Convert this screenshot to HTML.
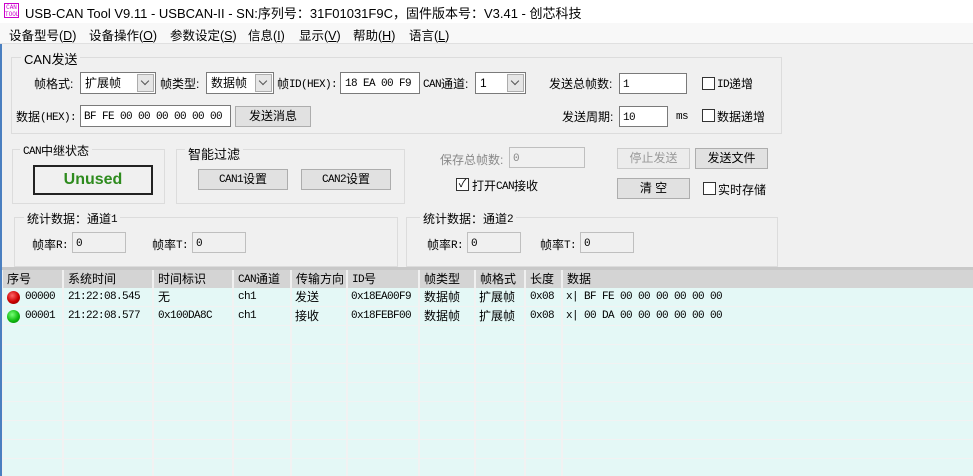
<!DOCTYPE html><html><head><meta charset="utf-8"><style>
*{margin:0;padding:0;box-sizing:border-box}
body{width:973px;height:476px;overflow:hidden;background:#f0f0f0;position:relative;font-family:"Liberation Sans","Noto Sans CJK SC",sans-serif;font-size:12px;color:#000}
.a{position:absolute;white-space:nowrap}
.m{font-family:"Liberation Mono","Noto Sans CJK SC",monospace;font-size:11px;letter-spacing:-0.6px;vertical-align:baseline}
span.m{position:relative;top:-1px}
.box{position:absolute;border:1px solid #dcdcdc}
.lg{position:absolute;background:#f0f0f0;padding:0 3px;white-space:nowrap}
.inp{position:absolute;background:#fff;border:1px solid #7a7a7a;font-family:"Liberation Mono","Noto Sans CJK SC",monospace;font-size:11px;letter-spacing:-0.6px;padding:3px 3px 1px;line-height:16px;white-space:nowrap;overflow:hidden}
.dis{background:#f0f0f0;border-color:#bfbfbf;color:#888}
.btn{position:absolute;background:#e1e1e1;border:1px solid #adadad;text-align:center;white-space:nowrap}
.cb{position:absolute;width:13px;height:13px;border:1px solid #333;background:#fff}
.sel{position:absolute;background:#fff;border:1px solid #7a7a7a;padding:1px 4px;line-height:18px}
.sel i{position:absolute;right:1px;top:1px;width:17px;height:18px;background:#e6e6e6;border:1px solid #acacac}
.sel i:after{content:"";position:absolute;left:4px;top:3px;width:5px;height:5px;border-right:1px solid #555;border-bottom:1px solid #555;transform:rotate(45deg)}
.hd{position:absolute;top:270px;height:18px;background:#d4d4d4;line-height:18px;padding-left:4px;white-space:nowrap}
.td{position:absolute;line-height:19px;white-space:nowrap}
</style></head><body>
<div class="a" style="left:0;top:0;width:973px;height:23px;background:#fff"></div>
<div class="a" style="left:4px;top:3px;width:15px;height:15px;border:1px solid #c0c;background:#fff;font-size:6px;line-height:7px;color:#c0c;text-align:center;font-family:'Liberation Mono'">CAN<br>TOOL</div>
<div class="a" style="left:25px;top:3px;font-size:13px">USB-CAN Tool V9.11 - USBCAN-II - SN:序列号：31F01031F9C，固件版本号：V3.41 - 创芯科技</div>
<div class="a" style="left:0;top:23px;width:973px;height:21px;background:#f8f8f8;border-bottom:1px solid #e0e0e0"></div>
<div class="a" style="left:9px;top:25px;font-size:12.5px">设备型号(<u>D</u>)</div>
<div class="a" style="left:89px;top:25px;font-size:12.5px">设备操作(<u>O</u>)</div>
<div class="a" style="left:170px;top:25px;font-size:12.5px">参数设定(<u>S</u>)</div>
<div class="a" style="left:248px;top:25px;font-size:12.5px">信息(<u>I</u>)</div>
<div class="a" style="left:299px;top:25px;font-size:12.5px">显示(<u>V</u>)</div>
<div class="a" style="left:353px;top:25px;font-size:12.5px">帮助(<u>H</u>)</div>
<div class="a" style="left:409px;top:25px;font-size:12.5px">语言(<u>L</u>)</div>
<div class="a" style="left:0;top:44px;width:2px;height:432px;background:#4a7fc0"></div>

<div class="box" style="left:11px;top:57px;width:771px;height:77px"></div>
<div class="lg" style="left:21px;top:49px;font-size:13px">CAN发送</div>
<div class="a" style="left:34px;top:75px">帧格式:</div>
<div class="sel" style="left:80px;top:72px;width:76px;height:22px">扩展帧<i></i></div>
<div class="a" style="left:160px;top:75px">帧类型:</div>
<div class="sel" style="left:206px;top:72px;width:68px;height:22px">数据帧<i></i></div>
<div class="a" style="left:277px;top:75px">帧<span class="m">ID(HEX):</span></div>
<div class="inp" style="left:340px;top:72px;width:80px;height:22px;padding-left:4px">18 EA 00 F9</div>
<div class="a" style="left:423px;top:75px"><span class="m">CAN</span>通道:</div>
<div class="sel" style="left:475px;top:72px;width:51px;height:22px">1<i></i></div>
<div class="a" style="left:549px;top:75px">发送总帧数:</div>
<div class="inp" style="left:619px;top:73px;width:68px;height:21px">1</div>
<div class="cb" style="left:702px;top:77px"></div>
<div class="a" style="left:717px;top:75px"><span class="m">ID</span>递增</div>
<div class="a" style="left:16px;top:108px">数据<span class="m">(HEX):</span></div>
<div class="inp" style="left:80px;top:105px;width:151px;height:22px">BF FE 00 00 00 00 00 00</div>
<div class="btn" style="left:235px;top:106px;width:76px;height:21px;line-height:19px">发送消息</div>
<div class="a" style="left:562px;top:108px">发送周期:</div>
<div class="inp" style="left:619px;top:106px;width:49px;height:21px">10</div>
<div class="a m" style="left:676px;top:111px">ms</div>
<div class="cb" style="left:702px;top:109px"></div>
<div class="a" style="left:717px;top:108px">数据递增</div>

<div class="box" style="left:12px;top:149px;width:153px;height:55px"></div>
<div class="lg" style="left:20px;top:142px"><span class="m">CAN</span>中继状态</div>
<div class="a" style="left:33px;top:165px;width:120px;height:30px;border:2px solid #222;background:#f0f0f0;color:#2e8b1e;font-weight:bold;font-size:16px;text-align:center;line-height:26px">Unused</div>
<div class="box" style="left:176px;top:149px;width:229px;height:55px"></div>
<div class="lg" style="left:185px;top:144px;font-size:13px">智能过滤</div>
<div class="btn" style="left:198px;top:169px;width:90px;height:21px;line-height:19px"><span class="m">CAN1</span>设置</div>
<div class="btn" style="left:301px;top:169px;width:90px;height:21px;line-height:19px"><span class="m">CAN2</span>设置</div>
<div class="a" style="left:440px;top:151px;color:#888">保存总帧数:</div>
<div class="inp dis" style="left:509px;top:147px;width:76px;height:21px">0</div>
<div class="cb" style="left:456px;top:178px;font-size:11px;line-height:11px;text-align:center">✓</div>
<div class="a" style="left:472px;top:177px">打开<span class="m">CAN</span>接收</div>
<div class="btn" style="left:617px;top:148px;width:73px;height:21px;line-height:19px;color:#999;border-color:#ccc;background:#ececec">停止发送</div>
<div class="btn" style="left:695px;top:148px;width:73px;height:21px;line-height:19px">发送文件</div>
<div class="btn" style="left:617px;top:178px;width:73px;height:21px;line-height:19px">清 空</div>
<div class="cb" style="left:703px;top:182px"></div>
<div class="a" style="left:718px;top:181px">实时存储</div>

<div class="box" style="left:14px;top:217px;width:384px;height:50px"></div>
<div class="lg" style="left:24px;top:210px">统计数据：通道<span class="m">1</span></div>
<div class="a" style="left:32px;top:236px">帧率<span class="m">R:</span></div>
<div class="inp dis" style="left:72px;top:232px;width:54px;height:21px;color:#000">0</div>
<div class="a" style="left:152px;top:236px">帧率<span class="m">T:</span></div>
<div class="inp dis" style="left:192px;top:232px;width:54px;height:21px;color:#000">0</div>
<div class="box" style="left:406px;top:217px;width:372px;height:50px"></div>
<div class="lg" style="left:420px;top:210px">统计数据：通道<span class="m">2</span></div>
<div class="a" style="left:427px;top:236px">帧率<span class="m">R:</span></div>
<div class="inp dis" style="left:467px;top:232px;width:54px;height:21px;color:#000">0</div>
<div class="a" style="left:540px;top:236px">帧率<span class="m">T:</span></div>
<div class="inp dis" style="left:580px;top:232px;width:54px;height:21px;color:#000">0</div>

<div class="a" style="left:2px;top:267px;width:971px;height:3px;background:#c8c8c8"></div>
<div class="a" style="left:3px;top:270px;width:970px;height:206px;background:#e4f8f6;background-image:repeating-linear-gradient(to bottom,transparent 0,transparent 18px,#f2f2f2 18px,#f2f2f2 19px);background-position:0 18px"></div>
<div class="a" style="left:3px;top:270px;width:970px;height:18px;background:#f0f0f0"></div>
<div class="hd" style="left:3px;width:59px">序号</div>
<div class="hd" style="left:64px;width:88px">系统时间</div>
<div class="hd" style="left:154px;width:78px">时间标识</div>
<div class="hd" style="left:234px;width:56px"><span class="m">CAN</span>通道</div>
<div class="hd" style="left:292px;width:54px">传输方向</div>
<div class="hd" style="left:348px;width:70px"><span class="m">ID</span>号</div>
<div class="hd" style="left:420px;width:54px">帧类型</div>
<div class="hd" style="left:476px;width:48px">帧格式</div>
<div class="hd" style="left:526px;width:35px">长度</div>
<div class="hd" style="left:563px;width:410px">数据</div>
<div class="a" style="left:62px;top:288px;width:2px;height:188px;background:#f2f2f2"></div>
<div class="a" style="left:152px;top:288px;width:2px;height:188px;background:#f2f2f2"></div>
<div class="a" style="left:232px;top:288px;width:2px;height:188px;background:#f2f2f2"></div>
<div class="a" style="left:290px;top:288px;width:2px;height:188px;background:#f2f2f2"></div>
<div class="a" style="left:346px;top:288px;width:2px;height:188px;background:#f2f2f2"></div>
<div class="a" style="left:418px;top:288px;width:2px;height:188px;background:#f2f2f2"></div>
<div class="a" style="left:474px;top:288px;width:2px;height:188px;background:#f2f2f2"></div>
<div class="a" style="left:524px;top:288px;width:2px;height:188px;background:#f2f2f2"></div>
<div class="a" style="left:561px;top:288px;width:2px;height:188px;background:#f2f2f2"></div>

<div class="a" style="left:7px;top:291px;width:13px;height:13px;border-radius:50%;background:radial-gradient(circle at 40% 35%,#f66,#c00 55%,#700)"></div>
<div class="a" style="left:7px;top:310px;width:13px;height:13px;border-radius:50%;background:radial-gradient(circle at 40% 35%,#7f7,#1b1 55%,#070)"></div>
<div class="td m" style="left:25px;top:288px">00000</div>
<div class="td m" style="left:68px;top:288px">21:22:08.545</div>
<div class="td" style="left:158px;top:288px">无</div>
<div class="td m" style="left:238px;top:288px">ch1</div>
<div class="td" style="left:295px;top:288px">发送</div>
<div class="td m" style="left:351px;top:288px">0x18EA00F9</div>
<div class="td" style="left:424px;top:288px">数据帧</div>
<div class="td" style="left:479px;top:288px">扩展帧</div>
<div class="td m" style="left:530px;top:288px">0x08</div>
<div class="td m" style="left:566px;top:288px">x| BF FE 00 00 00 00 00 00</div>
<div class="td m" style="left:25px;top:307px">00001</div>
<div class="td m" style="left:68px;top:307px">21:22:08.577</div>
<div class="td m" style="left:158px;top:307px">0x100DA8C</div>
<div class="td m" style="left:238px;top:307px">ch1</div>
<div class="td" style="left:295px;top:307px">接收</div>
<div class="td m" style="left:351px;top:307px">0x18FEBF00</div>
<div class="td" style="left:424px;top:307px">数据帧</div>
<div class="td" style="left:479px;top:307px">扩展帧</div>
<div class="td m" style="left:530px;top:307px">0x08</div>
<div class="td m" style="left:566px;top:307px">x| 00 DA 00 00 00 00 00 00</div>
</body></html>
